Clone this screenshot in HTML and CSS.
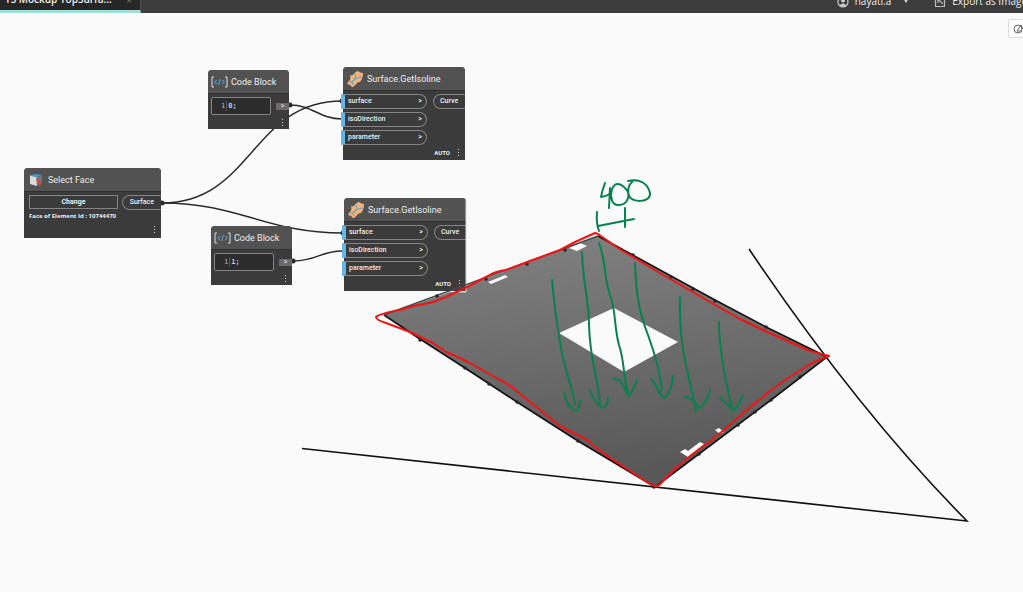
FILE: index.html
```html
<!DOCTYPE html>
<html lang="en">
<head>
<meta charset="utf-8">
<title>TS Mockup TopSurface</title>
<link rel="stylesheet" href="styles.css">
</head>
<body>
<header class="topbar">
  <div class="tab"><span class="tab-name">TS Mockup TopSurfa...</span><button class="tab-close" aria-label="Close tab">×</button></div>
  <nav class="actions">
    <button class="action">
      <svg class="action-icon" viewBox="0 0 12 12"><circle cx="6" cy="6" r="5" fill="none" stroke="#ccc" stroke-width="1.2"/><circle cx="6" cy="4.500" r="2" fill="#ccc"/><path d="M2.500 9.500Q6 5.500 9.500 9.500Q6 12 2.500 9.500" fill="#ccc"/></svg>
      nayati.a
      <svg class="caret" viewBox="0 0 6 4"><path d="M1 0l2 3 2-3z" fill="#ccc"/></svg>
    </button>
    <button class="action">
      <svg class="action-icon" viewBox="0 0 12 12"><path d="M1.500 1v9.500h9V1M4 3l5 5M4 7V3h4" fill="none" stroke="#bbb" stroke-width="1.200"/></svg>
      Export as Image
    </button>
  </nav>
</header>

<main class="canvas">
  <svg class="wires" viewBox="0 13 1023 579" width="1023" height="579" aria-hidden="true">
    <g fill="none" stroke="#2b2b2b" stroke-width="1.5">
      <path d="M162 203C252 203 252 101 342 101"/>
      <path d="M162 203C240 203 265 233 343 233"/>
      <path d="M290 105C313 105 319 119 342 119"/>
      <path d="M293 261C318 261 319 251 343 251"/>
    </g>
    <g fill="#2b2b2b"><circle cx="162" cy="203" r="2.500"/><circle cx="290" cy="105" r="2.500"/><circle cx="293" cy="261" r="2.500"/><circle cx="342" cy="101" r="2.500"/><circle cx="343" cy="233" r="2.500"/></g>
  </svg>

  <section class="node select-face">
    <h2 class="node-title">
      <svg class="title-icon cube" viewBox="0 0 14 14"><path d="M1 2.500L6 1l7 1-5 2.500z" fill="#3b9be0"/><path d="M1 2.500l7 2V13l-7-2z" fill="#d5dde3"/><path d="M8 4.500L13 2v8l-5 3z" fill="#6f7478"/><path d="M7 5l5.500 4-2 .5 2 2.500-1.500 1-2-2.500-1 1.500z" fill="#cf4a3c"/></svg>
      Select Face
    </h2>
    <div class="face-body">
      <div class="face-left"><button class="change">Change</button><p class="face-id">Face of Element Id : 10744470</p></div>
      <span class="out-port">Surface</span>
    </div>
    <div class="node-foot"><button class="dots" aria-label="Node menu"><i></i><i></i><i></i></button></div>
  </section>

  <section class="node code code-a">
    <h2 class="node-title">
      <svg class="title-icon wide" viewBox="0 0 17 12"><path d="M3 1H1v10h2M14 1h2v10h-2" fill="none" stroke="#ddd"/><path d="M6 4L3.500 6 6 8M11 4l2.500 2L11 8M9.500 3l-2 6" fill="none" stroke="#5aa9dc"/></svg>
      Code Block
    </h2>
    <div class="code-body"><label class="editor"><span class="line-no">1</span><input class="code-input" value="0;" aria-label="Code"></label><button class="code-out" aria-label="Output">&gt;</button></div>
    <div class="node-foot"><button class="dots" aria-label="Node menu"><i></i><i></i><i></i></button></div>
  </section>

  <section class="node code code-b">
    <h2 class="node-title">
      <svg class="title-icon wide" viewBox="0 0 17 12"><path d="M3 1H1v10h2M14 1h2v10h-2" fill="none" stroke="#ddd"/><path d="M6 4L3.500 6 6 8M11 4l2.500 2L11 8M9.500 3l-2 6" fill="none" stroke="#5aa9dc"/></svg>
      Code Block
    </h2>
    <div class="code-body"><label class="editor"><span class="line-no">1</span><input class="code-input" value="1;" aria-label="Code"></label><button class="code-out" aria-label="Output">&gt;</button></div>
    <div class="node-foot"><button class="dots" aria-label="Node menu"><i></i><i></i><i></i></button></div>
  </section>

  <section class="node iso iso-a">
    <h2 class="node-title">
      <svg class="title-icon surf" viewBox="0 0 18 18"><path d="M4 5C7 7 9 1 12 1Q14 3 17 3Q17 9 14 12C11 11 9 17 6 17Q4 14 1 14Q2 11 4 10Q5 7 4 5Z" fill="#f6b47c"/><path d="M3 12C7 13 9 7 16 7M9 4Q11 8 8 10T7 15" fill="none" stroke="#4f9fd0"/></svg>
      Surface.GetIsoline
    </h2>
    <div class="ports">
      <div class="in-ports"><button class="in-port"><span>surface</span><span>&gt;</span></button><button class="in-port"><span>isoDirection</span><span>&gt;</span></button><button class="in-port"><span>parameter</span><span>&gt;</span></button></div>
      <span class="out-port">Curve</span>
    </div>
    <div class="node-foot"><span class="auto">AUTO</span><button class="dots" aria-label="Node menu"><i></i><i></i><i></i></button></div>
  </section>

  <section class="node iso iso-b">
    <h2 class="node-title">
      <svg class="title-icon surf" viewBox="0 0 18 18"><path d="M4 5C7 7 9 1 12 1Q14 3 17 3Q17 9 14 12C11 11 9 17 6 17Q4 14 1 14Q2 11 4 10Q5 7 4 5Z" fill="#f6b47c"/><path d="M3 12C7 13 9 7 16 7M9 4Q11 8 8 10T7 15" fill="none" stroke="#4f9fd0"/></svg>
      Surface.GetIsoline
    </h2>
    <div class="ports">
      <div class="in-ports"><button class="in-port"><span>surface</span><span>&gt;</span></button><button class="in-port"><span>isoDirection</span><span>&gt;</span></button><button class="in-port"><span>parameter</span><span>&gt;</span></button></div>
      <span class="out-port">Curve</span>
    </div>
    <div class="node-foot"><span class="auto">AUTO</span><button class="dots" aria-label="Node menu"><i></i><i></i><i></i></button></div>
  </section>

  <svg class="geometry" viewBox="0 13 1023 579" width="1023" height="579" aria-label="Surface preview with isoline sketch">
    <defs><linearGradient id="shade" x1="0" y1="0" x2="0.15" y2="1"><stop offset="0" stop-color="#828282"/><stop offset="1" stop-color="#585858"/></linearGradient></defs>
    <path d="M384 315L450 292H466V286L598 236L671 276L715 300L766 327L827 357L771 400L655 487L578 441L517 402L465 368L420 339ZM559 333L624 372L678 342L614 308Z" fill="url(#shade)" fill-rule="evenodd"/>
    <g fill="#fafafa"><path d="M569 248l11-5 7 3-10 5zM488 282l17-7 3 2-17 7zM680 452l5-3 3 2 12-9 4 2-16 13zM715 430l4-2 5 4-4 2zM384 316l7 8 14 6-18-14z"/></g>
    <path d="M466 200V292H452" fill="none" stroke="#d8d8d8"/>
    <g fill="none" stroke="#111" stroke-width="1.600">
      <path d="M598 236L671 276L715 300L766 327L827 357L771 400L655 487L578 441L517 402L465 368L420 339L384 315"/>
      <path d="M384 315L598 236" stroke="#44484c"/>
      <path d="M749 249Q858 411 967 521L302 448.500"/>
    </g>
    <g fill="#252525"><circle cx="437" cy="296" r="1.800"/><circle cx="486" cy="279" r="1.800"/><circle cx="527" cy="264" r="1.800"/><circle cx="565" cy="250" r="1.800"/><circle cx="633" cy="255" r="1.800"/><circle cx="671" cy="277" r="1.800"/><circle cx="693" cy="289" r="1.800"/><circle cx="715" cy="301" r="1.800"/><circle cx="766" cy="327" r="1.800"/><circle cx="800" cy="377" r="1.800"/><circle cx="771" cy="400" r="1.800"/><circle cx="755" cy="412" r="1.800"/><circle cx="738" cy="425" r="1.800"/><circle cx="699" cy="454" r="1.800"/><circle cx="420" cy="340" r="1.800"/><circle cx="465" cy="368" r="1.800"/><circle cx="489" cy="384" r="1.800"/><circle cx="517" cy="402" r="1.800"/><circle cx="578" cy="441" r="1.800"/><circle cx="654" cy="487" r="1.800"/></g>
    <path d="M376 317Q378 314 404 309C412 305 423 305 433 302L446 297L467 287L488 276Q496 271 506 270L517 266L530 261L560 250L575 242L595 233L598 234L618 248L660 273L710 302L740 319L763 330L810 351L829 356Q815 361 807 366L788 378L770 391L750 407L733 422L712 440L694 453L678 466L663 481Q658 487 655 486Q651 485 647 482L627 469L600 451L587 440L560 426L530 402L513 388Q505 382 500 380L470 363L460 358L446 352L433 343L410 332L386 323Q376 320 376 317Z" fill="none" stroke="#f21414" stroke-width="2" stroke-linejoin="round"/>
    <g fill="none" stroke="#088050" stroke-width="2" stroke-linecap="round" stroke-linejoin="round">
      <path d="M552 280Q555 312 559 335C563 370 572 383 575 404M564 393Q567 405 574 410Q579 414 580 401"/>
      <path d="M582 252C583 285 589 299 589 325C590 362 598 377 600 403M590 390Q594 402 601 407Q607 410 608 398"/>
      <path d="M599 243C606 261 604 279 610 295C616 310 614 327 619 345C625 363 623 378 628 392M613 379C624 378 623 390 629 396Q634 389 637 380"/>
      <path d="M635 263C636 299 641 317 648 335C656 357 660 372 662 390M651 379C657 382 659 398 665 398Q672 390 673 376"/>
      <path d="M680 297C679 350 687 365 696 411M684 397C693 396 695 407 700 408Q708 400 710 390"/>
      <path d="M719 322Q719 355 732 408M720 398Q728 404 731 409Q735 414 743 395"/>
      <path d="M605 183Q602 191 601 197Q608 196 610 193M610 188L609 208M618 184C610 183 608 204 617 205C629 206 631 193 625 188Q621 184 618 184M628 181C640 178 648 184 650 193C651 203 632 203 629 196Q626 187 633 181"/>
      <path d="M597 212Q596 223 599 231M598 226L634 219M625 208V227"/>
    </g>
  </svg>

  <button class="view-toggle" aria-label="Toggle view">
    <svg class="view-icon" viewBox="0 0 14 14"><circle cx="6" cy="7" r="4" fill="none" stroke="#666"/><path d="M5 9l4-6M5 9h5M9 3l2 4" fill="none" stroke="#666"/></svg>
  </button>
</main>
</body>
</html>
```
FILE: styles.css
```css
* { box-sizing: border-box; }
body {
  margin: 0;
  min-height: 100vh;
  display: flex;
  flex-direction: column;
  background: #fafafa;
  font-family: Roboto, "Open Sans", sans-serif;
  color: #eee;
  overflow: hidden;
}
button { font: inherit; color: inherit; border: 0; padding: 0; background: none; }

.topbar {
  height: 13px;
  display: flex;
  justify-content: space-between;
  align-items: flex-end;
  background: #3c3c3c;
  overflow: hidden;
  flex: none;
}
.tab {
  width: 141px;
  height: 23px;
  display: flex;
  justify-content: space-between;
  padding: 1px 8px 0 5px;
  background: #262626;
  border-bottom: 3px solid #a0dcd8;
  border-right: 1px solid #555;
  font-family: "Open Sans", sans-serif;
  font-size: 10px;
  line-height: 17px;
  font-weight: 600;
  white-space: nowrap;
}
.tab-close { color: #777; }
.actions {
  display: flex;
  gap: 25px;
  margin-right: -4px;
  padding-bottom: 4px;
  font-family: "Open Sans", sans-serif;
  font-size: 10px;
  line-height: 15px;
}
.action { display: flex; align-items: center; gap: 6px; white-space: nowrap; }
.action-icon { width: 12px; height: 12px; }
.caret { width: 6px; height: 4px; margin-left: 6px; }

.canvas { position: relative; flex: 1; }
.wires, .geometry { position: absolute; left: 0; top: 0; pointer-events: none; }

.node { position: absolute; background: #3b3b3b; border-radius: 4px 4px 0 0; }
.select-face { left: 24px; top: 155px; width: 137px; }
.code { width: 81px; }
.code-a { left: 208px; top: 57px; }
.code-b { left: 211px; top: 213px; }
.iso { width: 122px; }
.iso-a { left: 343px; top: 54px; }
.iso-b { left: 344px; top: 185px; }

.node-title {
  height: 24px;
  margin: 0;
  padding: 0 3px;
  display: flex;
  align-items: center;
  gap: 3px;
  background: #525252;
  border-bottom: 1px solid #303030;
  border-radius: 4px 4px 0 0;
  font-size: 9px;
  line-height: 12px;
  font-weight: 400;
  white-space: nowrap;
}
.title-icon { flex: none; }
.cube { width: 14px; height: 14px; margin: 0 2px; }
.wide { width: 17px; height: 12px; }
.surf { width: 18px; height: 18px; }

.face-body { display: flex; justify-content: space-between; align-items: flex-start; padding: 3px 0 0 5px; }
.face-left { width: 89px; }
.change {
  display: block;
  width: 89px;
  height: 14px;
  border: 1px solid #858585;
  font-size: 7px;
  line-height: 12px;
  font-weight: 700;
}
.face-id { margin: 2px 0 0; font-family: "Open Sans", sans-serif; font-size: 6px; line-height: 10px; font-weight: 700; white-space: nowrap; }
.out-port {
  height: 15px;
  padding: 0 7px;
  border: 1px solid #858585;
  border-right: 0;
  border-radius: 8px 0 0 8px;
  font-size: 7px;
  line-height: 13px;
  font-weight: 500;
}
.ports { display: flex; justify-content: space-between; padding-top: 3px; }
.in-ports { display: flex; flex-direction: column; gap: 3px; margin-left: -2px; }
.in-port {
  width: 86px;
  height: 15px;
  display: flex;
  justify-content: space-between;
  padding: 0 4px 0 3px;
  border: 1px solid #858585;
  border-left: 4px solid #62b7e8;
  border-radius: 0 8px 8px 0;
  font-size: 7px;
  line-height: 12px;
  font-weight: 500;
}
.ports .out-port { width: 32px; padding: 0 6px; }
.node-foot { display: flex; justify-content: flex-end; align-items: center; gap: 8px; height: 14px; padding-right: 6px; }
.iso .node-foot { height: 15px; }
.select-face .node-foot { height: 17px; }
.auto { font-size: 6px; line-height: 8px; font-weight: 700; }
.dots { display: flex; flex-direction: column; gap: 2px; }
.dots i { width: 1px; height: 1px; background: #ddd; }

.code-body { display: flex; justify-content: space-between; align-items: center; padding: 3px 0 0 3px; }
.editor {
  width: 60px;
  height: 18px;
  display: flex;
  align-items: center;
  gap: 1px;
  padding-left: 9px;
  border: 1px solid #858585;
  border-radius: 2px;
  background: #2c2c2c;
  font: 7px/10px "DejaVu Sans Mono", monospace;
}
.line-no { color: #bbb; padding-right: 1px; border-right: 1px solid #555; }
.code-input { width: 30px; height: 12px; padding: 0; border: 0; background: none; color: #a8d4ef; font: inherit; font-weight: 700; }
.code-out { width: 13px; height: 7px; background: #6c6c6c; font-size: 7px; line-height: 7px; }

.view-toggle {
  position: absolute;
  right: 0;
  top: 6px;
  width: 15px;
  height: 19px;
  border: 1px solid #ddd;
  border-right: 0;
  border-radius: 3px 0 0 3px;
  background: #fff;
  display: flex;
  align-items: center;
  overflow: hidden;
}
.view-icon { width: 14px; height: 14px; flex: none; margin-left: 3px; }
```
